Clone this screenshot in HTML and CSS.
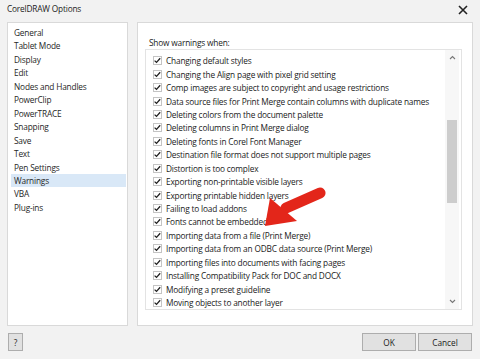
FILE: index.html
```html
<!DOCTYPE html>
<html lang="en">
<head>
  <meta charset="UTF-8" />
  <title>CorelDRAW Options</title>
  <link rel="stylesheet" href="styles.css">
</head>
<body>
  <div class="dialog">
    <div class="titlebar">
      <span class="title">CorelDRAW Options</span>
      <svg class="close" width="10" height="10" viewBox="0 0 10 10">
        <path d="M1 1 L9 9 M9 1 L1 9" stroke="#222" stroke-width="1.6" fill="none"/>
      </svg>
    </div>

    <div class="main">
      <ul class="nav">
        <li>General</li>
        <li>Tablet Mode</li>
        <li>Display</li>
        <li>Edit</li>
        <li>Nodes and Handles</li>
        <li>PowerClip</li>
        <li>PowerTRACE</li>
        <li>Snapping</li>
        <li>Save</li>
        <li>Text</li>
        <li>Pen Settings</li>
        <li class="active">Warnings</li>
        <li>VBA</li>
        <li>Plug-ins</li>
      </ul>

      <div class="page">
        <div class="label">Show warnings when:</div>
        <div class="listbox">
          <ul class="checks">
            <li><span class="cb"></span>Changing default styles</li>
            <li><span class="cb"></span>Changing the Align page with pixel grid setting</li>
            <li><span class="cb"></span>Comp images are subject to copyright and usage restrictions</li>
            <li><span class="cb"></span>Data source files for Print Merge contain columns with duplicate names</li>
            <li><span class="cb"></span>Deleting colors from the document palette</li>
            <li><span class="cb"></span>Deleting columns in Print Merge dialog</li>
            <li><span class="cb"></span>Deleting fonts in Corel Font Manager</li>
            <li><span class="cb"></span>Destination file format does not support multiple pages</li>
            <li><span class="cb"></span>Distortion is too complex</li>
            <li><span class="cb"></span>Exporting non-printable visible layers</li>
            <li><span class="cb"></span>Exporting printable hidden layers</li>
            <li><span class="cb"></span>Failing to load addons</li>
            <li><span class="cb"></span>Fonts cannot be embedded</li>
            <li><span class="cb"></span>Importing data from a file (Print Merge)</li>
            <li><span class="cb"></span>Importing data from an ODBC data source (Print Merge)</li>
            <li><span class="cb"></span>Importing files into documents with facing pages</li>
            <li><span class="cb"></span>Installing Compatibility Pack for DOC and DOCX</li>
            <li><span class="cb"></span>Modifying a preset guideline</li>
            <li><span class="cb"></span>Moving objects to another layer</li>
          </ul>
          <div class="scrollbar">
            <svg class="arrow" width="7" height="5" viewBox="0 0 7 5"><path d="M1 4 L3.5 1.5 L6 4" stroke="#777" stroke-width="1.1" fill="none"/></svg>
            <div class="track"><div class="thumb"></div></div>
            <svg class="arrow" width="7" height="5" viewBox="0 0 7 5"><path d="M1 1 L3.5 3.5 L6 1" stroke="#777" stroke-width="1.1" fill="none"/></svg>
          </div>
        </div>
      </div>
    </div>

    <div class="footer">
      <button class="btn help">?</button>
      <div class="actions">
        <button class="btn">OK</button>
        <button class="btn">Cancel</button>
      </div>
    </div>

    <!-- red callout arrow drawn over the list -->
    <svg class="pointer" width="70" height="44" viewBox="0 0 70 44">
      <path d="M22 22 L56 7" stroke="#e3261a" stroke-width="11" stroke-linecap="round" fill="none"/>
      <polygon points="1,40 6,12 33,35" fill="#e3261a"/>
    </svg>
  </div>
</body>
</html>
```

FILE: styles.css
```css
* {
  margin: 0;
  padding: 0;
  box-sizing: border-box;
}
body {
  background: #f2f2f2;
  font-family: 'Open Sans', sans-serif;
  font-size: 8.3px;
  letter-spacing: -0.18px;
  color: #1a1a1a;
}
.dialog {
  width: 480px;
  height: 359px;
  position: relative;
  overflow: hidden;
}
.titlebar {
  height: 22px;
  display: flex;
  align-items: flex-start;
  justify-content: space-between;
  padding: 2px 12px 0 7px;
}
.title {
  font-size: 8.3px;
  line-height: 13px;
  color: #222;
}
.close {
  margin-top: 3px;
}
.main {
  height: 304px;
  display: flex;
  gap: 9px;
  padding: 0 7px;
}
.nav {
  width: 121px;
  list-style: none;
  background: #fff;
  border: 1px solid #d9d9d9;
  padding: 3px 1px 0 3px;
}
.nav li {
  line-height: 13.45px;
  padding-left: 3px;
  color: #262626;
}
.nav li.active {
  background: #d9e8f7;
}
.page {
  flex: 1;
  background: #fff;
  border: 1px solid #d9d9d9;
  padding: 13px 10px 0 7px;
}
.label {
  line-height: 13px;
  padding-left: 4px;
}
.listbox {
  display: flex;
  height: 261px;
  border: 1px solid #e3e3e3;
  overflow: hidden;
}
.checks {
  flex: 1;
  list-style: none;
  padding: 4px 0 0 7px;
}
.checks li {
  display: flex;
  align-items: center;
  height: 13.45px;
  white-space: nowrap;
}
.cb {
  width: 9px;
  height: 9px;
  margin-right: 4px;
  border: 1px solid #c4c4c4;
  background: #fff url("data:image/svg+xml,%3Csvg xmlns='http://www.w3.org/2000/svg' viewBox='0 0 9 9'%3E%3Cpath d='M1.6 4.6 L3.5 6.4 L7.2 2.2' stroke='%23222' stroke-width='1.3' fill='none'/%3E%3C/svg%3E") no-repeat center / 9px 9px;
}
.scrollbar {
  width: 14px;
  display: flex;
  flex-direction: column;
  align-items: center;
  background: #f7f7f7;
  margin-right: 2px;
}
.arrow {
  margin: 5px 0;
}
.track {
  flex: 1;
  width: 100%;
  padding-top: 55px;
}
.thumb {
  width: 10px;
  height: 83px;
  margin: 0 auto;
  background: #cdcdcd;
}
.footer {
  display: flex;
  justify-content: space-between;
  padding: 7px 8px 0 8px;
}
.btn {
  height: 18px;
  font-family: 'Open Sans', sans-serif;
  font-size: 8.3px;
  color: #1a1a1a;
  background: #e1e1e1;
  border: 1px solid #adadad;
}
.help {
  width: 15px;
}
.actions {
  display: flex;
  gap: 2px;
}
.actions .btn {
  width: 54px;
}
.pointer {
  position: absolute;
  left: 264px;
  top: 186px;
}
```
